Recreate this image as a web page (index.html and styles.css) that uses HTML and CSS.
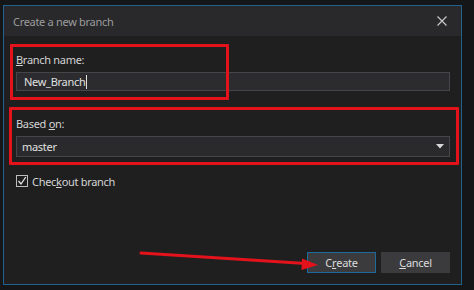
FILE: index.html
```html
<!DOCTYPE html>
<html>
<head>
<meta charset="utf-8">
<link rel="stylesheet" href="styles.css">
</head>
<body>
<div class="page">
  <div class="dialog">
    <div class="titlebar">
      <span class="title">Create a new branch</span>
      <svg class="close" width="10" height="10" viewBox="0 0 10 10"><path d="M0.5 0.5 L9.5 9.5 M9.5 0.5 L0.5 9.5" stroke="#c8c8c8" stroke-width="1.2" fill="none"/></svg>
    </div>
    <div class="content">
      <div class="label label-first"><u>B</u>ranch name:</div>
      <div class="input"><span>New_Branch</span><span class="caret"></span></div>
      <div class="label label-second">Based <u>o</u>n:</div>
      <div class="select">
        <span>master</span>
        <svg class="arrow" width="8" height="5" viewBox="0 0 8 5"><path d="M0 0 H8 L4 4.5 Z" fill="#d8d8d8"/></svg>
      </div>
      <div class="check-row">
        <span class="checkbox"><svg width="10" height="10" viewBox="0 0 10 10"><path d="M1.5 5 L4 8 L8.8 1" stroke="#e6e6e6" stroke-width="1.3" fill="none"/></svg></span>
        <span>Chec<u>k</u>out branch</span>
      </div>
      <div class="buttons">
        <div class="btn btn-primary">C<u>r</u>eate</div>
        <div class="btn"><u>C</u>ancel</div>
      </div>
    </div>
  </div>
  <div class="mark mark-name"></div>
  <div class="mark mark-base"></div>
  <svg class="pointer" width="474" height="290" viewBox="0 0 474 290">
    <line x1="141" y1="253" x2="306" y2="263.5" stroke="#e3121b" stroke-width="3" stroke-linecap="round"/>
    <polygon points="318,265 302,258.5 301.5,270" fill="#e3121b"/>
  </svg>
</div>
</body>
</html>
```

FILE: styles.css
```css
html, body {
  margin: 0;
  padding: 0;
  background: #151618;
}
body {
  width: 474px;
  height: 290px;
  overflow: hidden;
  font-family: "Noto Sans", "Open Sans", sans-serif;
  font-size: 11px;
  letter-spacing: -0.3px;
  color: #d4d4d4;
}
.page {
  position: relative;
  width: 474px;
  height: 290px;
  padding: 5px 0 0 3px;
  box-sizing: border-box;
}
.dialog {
  width: 459px;
  height: 280px;
  box-sizing: border-box;
  border: 1px solid #22618c;
  background: #1f1f20;
  display: flex;
  flex-direction: column;
}
.titlebar {
  height: 30px;
  background: #29292c;
  display: flex;
  align-items: center;
  justify-content: space-between;
  padding: 0 14px 0 9px;
}
.title {
  color: #9c9c9c;
}
.content {
  flex: 1;
  display: flex;
  flex-direction: column;
  padding: 0 11px 11px 12px;
}
.label {
  line-height: 16px;
  height: 16px;
}
.label-first { margin-top: 16px; }
.label-second { margin-top: 25px; }
.input {
  margin-top: 4px;
  height: 19px;
  box-sizing: border-box;
  border: 1px solid #46464a;
  background: #2c2c2f;
  display: flex;
  align-items: center;
  padding-left: 7px;
  color: #e0e0e0;
}
.caret {
  width: 1px;
  height: 14px;
  background: #e0e0e0;
  margin-left: 1px;
}
.select {
  margin-top: 4px;
  height: 21px;
  box-sizing: border-box;
  border: 1px solid #46464a;
  background: #2a2a2d;
  display: flex;
  align-items: center;
  justify-content: space-between;
  padding: 0 5px 0 5px;
  color: #e0e0e0;
}
.check-row {
  margin-top: 18px;
  display: flex;
  align-items: center;
  gap: 4px;
  height: 12px;
}
.checkbox {
  width: 12px;
  height: 12px;
  box-sizing: border-box;
  border: 1px solid #bdbdbd;
  display: flex;
  align-items: center;
  justify-content: center;
}
.buttons {
  margin-top: auto;
  display: flex;
  justify-content: flex-end;
  gap: 5px;
}
.btn {
  width: 69px;
  height: 21px;
  box-sizing: border-box;
  background: #3b3b3e;
  border: 1px solid #3b3b3e;
  display: flex;
  align-items: center;
  justify-content: center;
  color: #dcdcdc;
}
.btn-primary {
  border-color: #1f6a9c;
}
.mark {
  position: absolute;
  border: 3px solid #e3121b;
  box-sizing: border-box;
  border-radius: 1px;
}
.mark-name {
  left: 10px;
  top: 44px;
  width: 219px;
  height: 56px;
}
.mark-base {
  left: 9px;
  top: 107px;
  width: 450px;
  height: 58px;
}
.pointer {
  position: absolute;
  left: 0;
  top: 0;
}
```
